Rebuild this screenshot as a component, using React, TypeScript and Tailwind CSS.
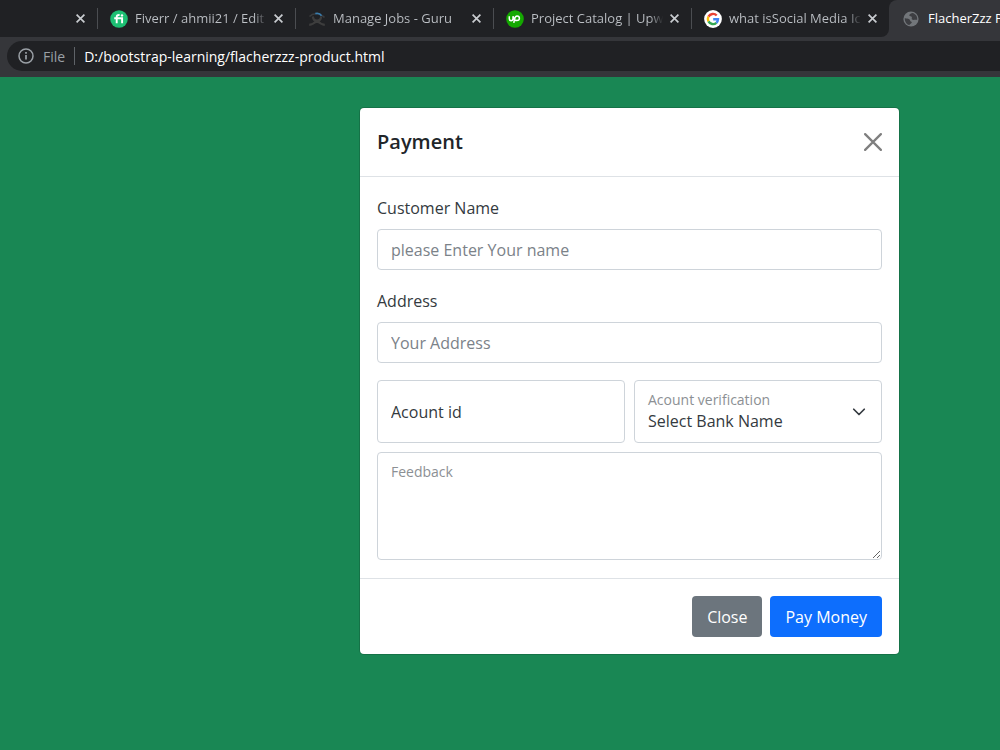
import { useState, type ReactNode } from "react";

function FiverrIcon() {
  return (
    <svg viewBox="0 0 18 18" className="size-[18px] shrink-0" aria-hidden="true">
      <circle cx="9" cy="9" r="8.8" fill="#1dbf73" />
      <path
        d="M4.200 8.300h7.900v4.900M6.700 13.200V7c0-1.500.9-2.200 2.900-2"
        fill="none"
        stroke="#fff"
        strokeWidth="1.900"
      />
      <circle cx="12" cy="5.400" r="1.200" fill="#fff" />
    </svg>
  );
}

function GuruIcon() {
  return (
    <svg viewBox="0 0 18 18" className="size-[18px] shrink-0" aria-hidden="true" fill="none">
      <path d="M1.500 6.500C3.300 4.700 5.500 3.900 7.500 3.800M13.500 5.500c1.500.5 2.500 1.300 3 2" stroke="#3a3b3c" strokeWidth="1.600" />
      <path d="M7.300 3.700c2.600-.6 4.900.1 6.300 2" stroke="#3a7cab" strokeWidth="1.800" />
      <path
        d="M4.800 6.500c.3 2.500 1.900 4.300 4.200 4.300s3.900-1.800 4.200-4.300M1.200 14.800c3-.2 5.300-1.600 7.800-4 2.500 2.400 4.800 3.800 7.800 4"
        stroke="#3d3d3d"
        strokeWidth="2.200"
      />
    </svg>
  );
}

function UpworkIcon() {
  return (
    <svg viewBox="0 0 18 18" className="size-[18px] shrink-0" aria-hidden="true">
      <circle cx="9" cy="9" r="8.800" fill="#14a800" />
      <path
        d="M3.300 6.200v2.600c0 2.500 3.700 2.500 3.700 0V6.200c.6 2.200 1.800 4.400 3.900 4.400 1.500 0 2.500-1 2.500-2.300s-1-2.300-2.300-2.300c-1.900 0-2.300 1.700-2.700 3.600l-.6 3.200"
        fill="none"
        stroke="#fff"
        strokeWidth="1.500"
      />
    </svg>
  );
}

function GoogleIcon() {
  return (
    <svg viewBox="0 0 18 18" className="size-[18px] shrink-0" aria-hidden="true" fill="none" strokeWidth="2.400">
      <circle cx="9" cy="9" r="8.900" fill="#fff" />
      <path d="M12.700 5.500A5.100 5.100 0 0 0 4.500 6.600" stroke="#ea4335" />
      <path d="M4.500 6.600a5.100 5.100 0 0 0 0 4.800" stroke="#fbbc05" />
      <path d="M4.500 11.400a5.100 5.100 0 0 0 7.900 1.400" stroke="#34a853" />
      <path d="M12.400 12.800A5.100 5.100 0 0 0 14 9.300H9.200" stroke="#4285f4" />
    </svg>
  );
}

function GlobeIcon() {
  return (
    <svg viewBox="0 0 16 16" className="size-4 shrink-0" aria-hidden="true">
      <circle cx="8" cy="8" r="7.600" fill="#72767a" />
      <path
        d="M1.800 7c1.400.9 3.200.3 4.500 1.200 1.500 1 .4 1.900 1.700 2.400 1.200.4 1 1.600-.1 2-.9.400-1 1.300-1.700 1.500C3.500 13.300 1.500 10.500 1.800 7ZM9.300 1.900C7.400 2.600 5.800 3.500 6.300 4.600c.5 1 2.100.4 2.500 1.400.4 1.200-.6 1.700.3 2.500 1.200 1 3-.2 5 .4C14.800 5.500 12.800 2.600 9.300 1.900Z"
        fill="#3d3e42"
      />
    </svg>
  );
}

function Cross({ className }: { className: string }) {
  return (
    <svg viewBox="0 0 16 16" className={className} fill="none" stroke="currentColor" aria-hidden="true">
      <path d="M1 1l14 14M15 1L1 15" />
    </svg>
  );
}

function TabClose({ title }: { title: string }) {
  return (
    <button
      type="button"
      aria-label={`Close ${title}`}
      className="grid size-4 shrink-0 place-items-center text-[#c9ccd0]"
    >
      <Cross className="size-[9px] stroke-[3]" />
    </button>
  );
}

function Tab({ icon, title }: { icon: ReactNode; title: string }) {
  return (
    <div className="flex w-[198px] shrink-0 items-center border-l border-[#4b4d51] pr-[9px] pl-3">
      {icon}
      <a
        href="#"
        className="ml-[7px] min-w-0 flex-1 overflow-hidden bg-linear-to-r from-[#bdc1c6] from-90% to-transparent bg-clip-text whitespace-nowrap text-transparent"
      >
        {title}
      </a>
      <span className="ml-[3px] flex">
        <TabClose title={title} />
      </span>
    </div>
  );
}

const tabs = [
  { title: "Fiverr / ahmii21 / Edit", icon: <FiverrIcon /> },
  { title: "Manage Jobs - Guru", icon: <GuruIcon /> },
  { title: "Project Catalog | Upwork", icon: <UpworkIcon /> },
  { title: "what isSocial Media Icons", icon: <GoogleIcon /> },
];

function BrowserBar() {
  return (
    <header className="overflow-hidden bg-[#35363a]">
      <nav className="flex h-[37px] bg-[#35363a] text-[13px] leading-[21px]">
        <div className="flex shrink-0 items-center rounded-br-lg bg-[#202124] py-2">
          <div className="flex w-[97px] justify-end pr-[9px]">
            <TabClose title="tab" />
          </div>
          {tabs.map((tab) => (
            <Tab key={tab.title} {...tab} />
          ))}
        </div>
        <div className="min-w-0 flex-1 bg-[#202124]">
          <div className="flex h-full items-center overflow-hidden rounded-tl-lg bg-[#35363a] pl-[14px]">
            <GlobeIcon />
            <a href="#" className="ml-[9px] whitespace-nowrap text-white">
              FlacherZzz Product
            </a>
          </div>
        </div>
      </nav>
      <div className="pt-1 pb-[6px] pl-[7px]">
        <div className="flex h-[30px] items-center rounded-l-full bg-[#202124] pl-[11px] text-[14px]">
          <svg viewBox="0 0 16 16" className="size-4 shrink-0" fill="none" stroke="#9aa0a6" strokeWidth="1.500" aria-hidden="true">
            <circle cx="8" cy="8" r="7" />
            <path d="M8 7v4.500M8 4v1.700" strokeWidth="1.700" />
          </svg>
          <span className="ml-[9px] text-[#9aa0a6]">File</span>
          <span className="ml-[9px] h-[18px] w-px bg-[#5f6368]" />
          <input
            aria-label="Address bar"
            defaultValue="D:/bootstrap-learning/flacherzzz-product.html"
            className="ml-[9px] min-w-0 flex-1 bg-transparent font-medium text-white outline-none"
          />
        </div>
      </div>
    </header>
  );
}

const control = "block w-full rounded border border-[#ced4da] bg-white px-[13px] outline-none";

export default function App() {
  const [bank, setBank] = useState("Select Bank Name");

  return (
    <div className="min-h-screen bg-[#198754] font-['Open_Sans','Noto_Sans',sans-serif]">
      <BrowserBar />
      <main className="px-[101px] pt-[31px] pb-8">
        <form
          aria-labelledby="payment-title"
          className="ml-auto max-w-[539px] rounded bg-white text-[16px] leading-[26px] text-[#343a40] shadow-[0_0_0_1px_rgba(0,0,0,0.15)]"
        >
          <div className="flex items-center justify-between border-b border-[#dee2e6] px-[17px] py-5">
            <h1 id="payment-title" className="text-[20px] leading-7 font-semibold text-[#212529]">
              Payment
            </h1>
            <button type="button" aria-label="Close dialog" className="text-[#7f7f7f]">
              <Cross className="size-[18px] stroke-[2] [stroke-linecap:round]" />
            </button>
          </div>

          <div className="px-[17px] py-[18px]">
            <label htmlFor="customer" className="mb-2 block">
              Customer Name
            </label>
            <input
              id="customer"
              placeholder="please Enter Your name"
              className={`${control} h-[41px] placeholder:text-[#7b8289]`}
            />
            <label htmlFor="address" className="mt-[18px] mb-2 block">
              Address
            </label>
            <input
              id="address"
              placeholder="Your Address"
              className={`${control} h-[41px] placeholder:text-[#7b8289]`}
            />

            <div className="mt-[17px] grid grid-cols-2 gap-[9px]">
              <input
                aria-label="Acount id"
                placeholder="Acount id"
                className={`${control} h-[63px] placeholder:text-[#343a40]`}
              />
              <div className="relative">
                <select
                  id="bank"
                  value={bank}
                  onChange={(e) => setBank(e.target.value)}
                  className={`${control} h-[63px] appearance-none pt-[18px]`}
                >
                  <option>Select Bank Name</option>
                </select>
                <label
                  htmlFor="bank"
                  className="pointer-events-none absolute top-2 left-[14px] text-[14px] leading-6 text-[#8c9094]"
                >
                  Acount verification
                </label>
                <svg
                  viewBox="0 0 16 16"
                  className="pointer-events-none absolute top-6 right-4 size-[14px]"
                  fill="none"
                  stroke="#343a40"
                  strokeWidth="2"
                  strokeLinecap="round"
                  strokeLinejoin="round"
                  aria-hidden="true"
                >
                  <path d="m2 6 6 6 6-6" />
                </svg>
              </div>
            </div>

            <div className="relative mt-[9px]">
              <textarea id="feedback" className={`${control} h-[108px] resize-y pt-7`} />
              <label
                htmlFor="feedback"
                className="pointer-events-none absolute top-2 left-[14px] text-[14px] leading-6 text-[#8c9094]"
              >
                Feedback
              </label>
            </div>
          </div>

          <div className="flex justify-end gap-2 border-t border-[#dee2e6] px-[17px] py-[17px] text-white">
            <button type="button" className="h-[41px] rounded bg-[#6c757d] px-[15px]">
              Close
            </button>
            <button type="submit" className="h-[41px] rounded bg-[#0d6efd] px-[15px]">
              Pay Money
            </button>
          </div>
        </form>
      </main>
    </div>
  );
}
